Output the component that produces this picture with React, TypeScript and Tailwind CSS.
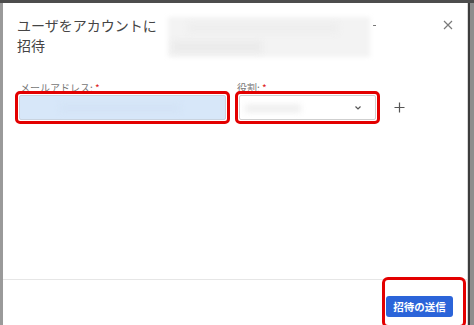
import React from "react";

export default function App() {
  return (
    <div
      className="w-[474px] h-[325px] bg-[#8d8d8d] flex flex-col overflow-hidden"
      style={{ fontFamily: '"Noto Sans CJK JP", "Noto Sans", sans-serif' }}
    >
      <div className="h-[3px] bg-[#4d4d4d] shrink-0" />
      <div className="flex flex-1 min-h-0">
        <div className="w-[3px] bg-[#9a9a9a] shrink-0" />
        <div className="flex-1 bg-white flex flex-col min-w-0">
          {/* header */}
          <div className="flex items-start pt-[12px] pl-[14px] pr-[10px]">
            <div className="w-[150px] text-[14px] leading-[20px] text-[#454545]">
              ユーザをアカウントに招待
            </div>
            <div className="ml-[1px] mt-[2px] relative w-[202px] h-[40px]">
              <div className="absolute inset-0 bg-[#f3f3f3] blur-[2px]" />
              <div className="absolute left-[4px] top-[24px] w-[90px] h-[12px] bg-[#ebebeb] blur-[3px]" />
              <div className="absolute left-[20px] top-[6px] w-[150px] h-[10px] bg-[#eeeeee] blur-[3px]" />
            </div>
            <div className="ml-[3px] mt-[10px] w-[3px] h-px bg-[#777]" />
            <div className="flex-1" />
            <svg width="10" height="10" viewBox="0 0 10 10" className="mt-[5px] mr-[4px]">
              <path d="M1 1 L9 9 M9 1 L1 9" stroke="#7a7a7a" strokeWidth="1.2" />
            </svg>
          </div>
          {/* form */}
          <div className="flex items-end pl-[12px] mt-[25px]">
            <div className="flex flex-col">
              <div className="pl-[5px] text-[10px] leading-[12px] text-[#777] mb-[-3px] relative z-0">
                メールアドレス: <span className="text-[#e02020]">*</span>
              </div>
              <div className="relative z-10 w-[215px] h-[33px] border-[3px] border-[#e30000] rounded-[5px] p-px">
                <div className="w-full h-full bg-[#d7e7f9] border border-[#c9d3df] rounded-[2px] relative overflow-hidden">
                  <div className="absolute left-[40px] top-[9px] w-[120px] h-[6px] bg-[#d2e2f5] blur-[3px]" />
                </div>
              </div>
            </div>
            <div className="flex flex-col ml-[5px]">
              <div className="pl-[2px] text-[10px] leading-[12px] text-[#777] mb-[-3px] relative z-0">
                役割: <span className="text-[#e02020]">*</span>
              </div>
              <div className="relative z-10 w-[145px] h-[33px] border-[3px] border-[#e30000] rounded-[5px] p-px">
                <div className="w-full h-full bg-white border border-[#cfcfcf] rounded-[2px] relative flex items-center">
                  <div className="absolute left-[5px] top-[9px] w-[56px] h-[7px] bg-[#ececec] blur-[3px]" />
                  <div className="flex-1" />
                  <svg width="8" height="6" viewBox="0 0 8 6" className="mr-[13px] mt-[1px]">
                    <path d="M1.5 1.5 L4 4 L6.5 1.5" stroke="#555" strokeWidth="1.2" fill="none" />
                  </svg>
                </div>
              </div>
            </div>
            <svg width="11" height="11" viewBox="0 0 11 11" className="ml-[14px] mb-[11px]">
              <path d="M5.5 0.5 V10.5 M0.5 5.5 H10.5" stroke="#555" strokeWidth="1.2" />
            </svg>
          </div>
          <div className="flex-1" />
          {/* footer */}
          <div className="border-t border-[#e6e6e6] h-[46px] shrink-0 flex justify-end items-start pt-[12px] pr-[14px]">
            <div className="relative">
              <div className="absolute left-[-4px] right-[-13px] top-[-15px] bottom-[-11px] border-[3px] border-[#e30000] rounded-[6px]" />
              <button className="relative h-[21px] w-[67px] bg-[#2b64d9] rounded-[3px] text-white text-[10.5px] leading-[21px] font-bold text-center">
                招待の送信
              </button>
            </div>
          </div>
        </div>
        <div className="w-px bg-[#d8d8d8] shrink-0" />
        <div className="w-[2px] bg-[#3d3d3d] shrink-0" />
        <div className="w-[4px] bg-[#8d8d8d] shrink-0" />
      </div>
    </div>
  );
}
